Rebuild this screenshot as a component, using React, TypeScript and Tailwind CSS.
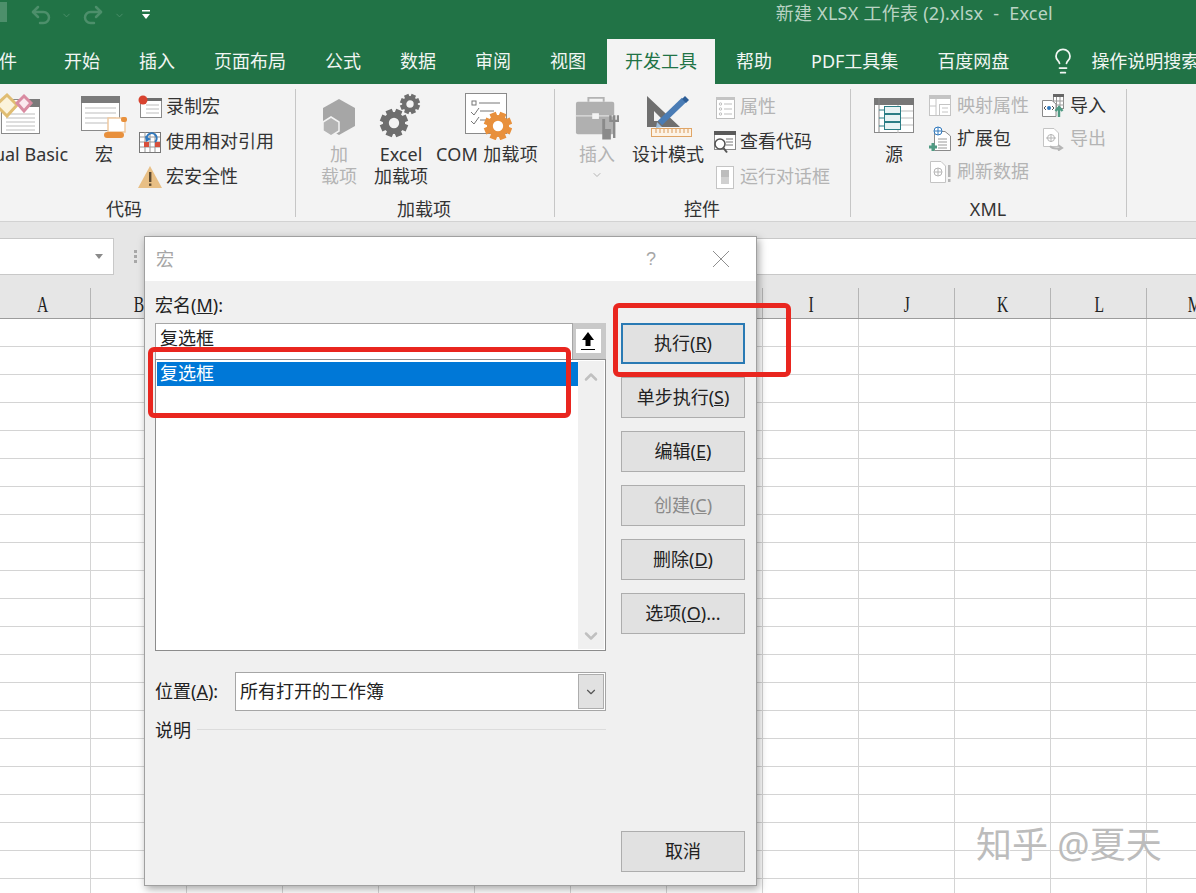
import { ChevronDown, ChevronUp, Lightbulb, Redo2, Undo2 } from 'lucide-react';
import type { ReactNode } from 'react';

const FONT = "font-['Noto_Sans','Noto_Sans_CJK_SC',sans-serif]";

const TABS = ['开始', '插入', '页面布局', '公式', '数据', '审阅', '视图'];
const TABS_AFTER = ['帮助', 'PDF工具集', '百度网盘'];
const COLS = ['A', 'B', 'C', 'D', 'E', 'F', 'G', 'H', 'I', 'J', 'K', 'L', 'M'];

// 齿轮：圆环加一圈齿
function Gear({ cx, cy, r, color, hole = 'none' }: { cx: number; cy: number; r: number; color: string; hole?: string }) {
  const teeth = [0, 45, 90, 135, 180, 225, 270, 315];
  return (
    <g>
      {teeth.map(a => (
        <rect
          key={a}
          x={cx - r * 0.24}
          y={cy - r}
          width={r * 0.48}
          height={r * 0.5}
          fill={color}
          transform={`rotate(${a + 22.5} ${cx} ${cy})`}
        />
      ))}
      <circle cx={cx} cy={cy} r={r * 0.58} fill={hole} stroke={color} strokeWidth={r * 0.42} />
    </g>
  );
}

function TableLines({ x, y, w, rows, gap, color = '#bdbdbd' }: { x: number; y: number; w: number; rows: number; gap: number; color?: string }) {
  return (
    <>
      {Array.from({ length: rows }).map((_, i) => (
        <line key={i} x1={x} x2={x + w} y1={y + i * gap} y2={y + i * gap} stroke={color} strokeWidth="1" />
      ))}
    </>
  );
}

function VbIcon() {
  return (
    <svg width="42" height="44" viewBox="0 0 42 44" className="ml-[4px] overflow-visible">
      <rect x="1.5" y="5.5" width="38" height="34" fill="#fff" stroke="#8a8a8a" />
      <rect x="25" y="5" width="15" height="8" fill="#7a7a7a" />
      <TableLines x={6} y={20} w={29} rows={5} gap={4} />
      <path d="M7 1 L17 11 L7 22 L-4 11 Z" fill="#fbf3dc" stroke="#e0bd73" strokeWidth="3" />
      <path d="M24 2 L31 9 L24 17 L17 9 Z" fill="#fbe9ee" stroke="#d98ba1" strokeWidth="3" />
    </svg>
  );
}

function MacroIcon() {
  return (
    <svg width="46" height="44" viewBox="0 0 46 44">
      <rect x="0.5" y="2.5" width="38" height="34" fill="#fff" stroke="#8a8a8a" />
      <rect x="0" y="2" width="39" height="7" fill="#7a7a7a" />
      <TableLines x={4} y={14} w={31} rows={4} gap={5} />
      <path d="M27 24 H44 V38 H27 Z" fill="#fff" stroke="#f0c9a0" strokeWidth="1.5" />
      <rect x="40" y="23" width="6" height="5" rx="2" fill="#e8903c" />
      <rect x="23" y="38" width="20" height="6" rx="3" fill="#e8903c" />
    </svg>
  );
}

function RecordIcon() {
  return (
    <svg width="24" height="24" viewBox="0 0 24 24">
      <rect x="2.5" y="3.5" width="21" height="19" fill="#fff" stroke="#8a8a8a" />
      <rect x="2" y="3" width="22" height="3" fill="#6e6e6e" />
      <TableLines x={8} y={10} w={13} rows={3} gap={4} />
      <circle cx="5" cy="5" r="4.5" fill="#d8432f" />
    </svg>
  );
}

function RelativeIcon() {
  return (
    <svg width="24" height="24" viewBox="0 0 24 24">
      <rect x="1.5" y="2.5" width="21" height="20" fill="#fff" stroke="#777" />
      {[7, 12, 17].map(x => (
        <line key={x} x1={x} x2={x} y1="2" y2="22" stroke="#999" />
      ))}
      {[7, 12, 17].map(y => (
        <line key={y} x1="2" x2="22" y1={y} y2={y} stroke="#999" />
      ))}
      <rect x="6" y="12" width="5" height="5" fill="#d8503c" />
      <rect x="17" y="12" width="5" height="5" fill="#d8503c" />
      <path d="M9 10 A5 5 0 1 1 17 12" fill="none" stroke="#2f78bd" strokeWidth="2" />
      <path d="M7 6 L8 12 L13 9 Z" fill="#2f78bd" />
    </svg>
  );
}

function WarnIcon() {
  return (
    <svg width="24" height="24" viewBox="0 0 24 24">
      <path d="M12 1 L24 23 H0 Z" fill="#e8bf85" />
      <rect x="11" y="7" width="2.4" height="10" fill="#5c4a30" />
      <rect x="11" y="18.5" width="2.4" height="2.4" fill="#5c4a30" />
    </svg>
  );
}

function AddinIcon() {
  return (
    <svg width="34" height="40" viewBox="0 0 34 40">
      <path d="M17 1 L33 10 V28 L17 37 L1 28 V10 Z" fill="#a6a6a6" />
      <path d="M9 19 L17 24 V33 L9 38 L1 33 V24 Z" fill="#b3b3b3" stroke="#f3f3f3" strokeWidth="1.5" />
    </svg>
  );
}

function ExcelAddinIcon() {
  return (
    <svg width="44" height="48" viewBox="0 0 44 48" className="-mb-[3px]">
      <Gear cx={15} cy={30} r={14} color="#6e6e6e" />
      <Gear cx={31} cy={11} r={10} color="#6e6e6e" />
    </svg>
  );
}

function ComIcon() {
  return (
    <svg width="50" height="48" viewBox="0 0 50 48" className="-mb-[2px]">
      <rect x="3.5" y="1.5" width="41" height="40" fill="#fff" stroke="#8a8a8a" />
      <rect x="10" y="9" width="4" height="4" fill="none" stroke="#777" />
      <line x1="17" x2="38" y1="11" y2="11" stroke="#777" />
      <path d="M9 20 L12 23 L17 16" fill="none" stroke="#777" />
      <line x1="18" x2="32" y1="19" y2="19" stroke="#777" />
      <path d="M9 29 L12 32 L17 25" fill="none" stroke="#777" />
      <line x1="18" x2="26" y1="28" y2="28" stroke="#777" />
      <Gear cx={36} cy={34} r={14} color="#e8903c" hole="#fff" />
    </svg>
  );
}

function BriefcaseIcon() {
  return (
    <svg width="46" height="46" viewBox="0 0 46 46" className="-mb-[3px]">
      <path d="M14 6 V2 H30 V6" fill="none" stroke="#b3b3b3" strokeWidth="2" />
      <rect x="1" y="6" width="40" height="34" rx="2" fill="#b0b0b0" />
      <rect x="1" y="20" width="40" height="1.5" fill="#d9d9d9" />
      <rect x="18" y="18" width="7" height="6" fill="#f3f3f3" />
      <path d="M30 24 L30 36 M30 36 h6 v8 h-6 z" stroke="#8a8a8a" strokeWidth="3" fill="#8a8a8a" />
      <path d="M41 20 v24 M37 20 v6 h8 v-6" stroke="#8a8a8a" strokeWidth="2.5" fill="none" />
    </svg>
  );
}

function DesignIcon() {
  return (
    <svg width="48" height="46" viewBox="0 0 48 46" className="-mb-[4px]">
      <path d="M3 0 L36 31 H3 Z M10 15 V25 H20 Z" fill="#6f6f6f" fillRule="evenodd" />
      <path d="M16 27 L40 4" stroke="#4a7cb5" strokeWidth="6" />
      <path d="M38 3 L41 0 L45 4 L42 7 Z" fill="#2c5d96" />
      <path d="M12 32 L13 26 L18 31 Z" fill="#9fc0df" />
      <rect x="7.5" y="32.5" width="40" height="8" fill="#fdf3e6" stroke="#e0a566" />
      {[12, 16, 20, 24, 28, 32, 36, 40, 44].map(x => (
        <line key={x} x1={x} x2={x} y1="33" y2="37" stroke="#d99a5a" />
      ))}
    </svg>
  );
}

function PropsIcon() {
  return (
    <svg width="24" height="24" viewBox="0 0 24 24">
      <rect x="3.5" y="2.5" width="18" height="21" fill="#fff" stroke="#bdbdbd" />
      <rect x="3" y="2" width="19" height="3" fill="#c4c4c4" />
      {[9, 14, 19].map(y => (
        <g key={y}>
          <circle cx="7.5" cy={y} r="1.2" fill="none" stroke="#bdbdbd" />
          <line x1="11" x2="19" y1={y} y2={y} stroke="#bdbdbd" />
        </g>
      ))}
    </svg>
  );
}

function ViewCodeIcon() {
  return (
    <svg width="24" height="24" viewBox="0 0 24 24">
      <rect x="1.5" y="1.5" width="21" height="18" fill="#fff" stroke="#8a8a8a" />
      <rect x="1" y="1" width="22" height="4" fill="#5a5a5a" />
      {[9, 12, 15].map(y => (
        <line key={y} x1="13" x2="20" y1={y} y2={y} stroke="#777" />
      ))}
      <circle cx="7" cy="14" r="5" fill="#fff" stroke="#555" strokeWidth="1.6" />
      <path d="M10.5 18 L14 22.5" stroke="#555" strokeWidth="2" />
    </svg>
  );
}

function RunDialogIcon() {
  return (
    <svg width="24" height="24" viewBox="0 0 24 24">
      <rect x="3.5" y="1.5" width="17" height="22" fill="#fff" stroke="#c4c4c4" />
      <rect x="8" y="5" width="8" height="14" fill="#d0d0d0" />
      <rect x="8" y="5" width="8" height="7" fill="#bdbdbd" />
    </svg>
  );
}

function SourceIcon() {
  return (
    <svg width="42" height="38" viewBox="0 0 42 38" className="mb-[3px]">
      <rect x="1.5" y="1.5" width="39" height="34" fill="#fff" stroke="#8a8a8a" />
      <rect x="1" y="1" width="40" height="7" fill="#777" />
      <line x1="6" x2="6" y1="1" y2="36" stroke="#8a8a8a" />
      <line x1="25" x2="25" y1="8" y2="36" stroke="#bbb" />
      {[14, 21, 28].map(y => (
        <line key={y} x1="25" x2="40" y1={y} y2={y} stroke="#bbb" />
      ))}
      {[9, 17, 25].map(y => (
        <rect key={y} x="11.5" y={y + 0.5} width="16" height="7" fill="#e8f3f4" stroke="#2b7d85" />
      ))}
      <path d="M6 13 H11 M6 21 H11 M6 29 H11" stroke="#2b7d85" />
    </svg>
  );
}

function MapPropsIcon() {
  return (
    <svg width="24" height="24" viewBox="0 0 24 24">
      <rect x="1.5" y="1.5" width="21" height="20" fill="#fff" stroke="#c4c4c4" />
      <rect x="1" y="1" width="22" height="4" fill="#c4c4c4" />
      <line x1="8" x2="8" y1="5" y2="21" stroke="#c4c4c4" />
      <line x1="1" x2="8" y1="12" y2="12" stroke="#c4c4c4" />
      <rect x="11.5" y="10.5" width="11" height="11" fill="#fff" stroke="#c4c4c4" />
      <path d="M14 14 H20 M14 18 H20" stroke="#c4c4c4" />
    </svg>
  );
}

function ExpansionIcon() {
  return (
    <svg width="24" height="26" viewBox="0 0 24 26">
      <path d="M6.5 5.5 H17 L22.5 10 V24.5 H6.5 Z" fill="#fff" stroke="#8a8a8a" />
      <path d="M10 13 H19 M10 16 H19 M10 19 H19 M10 22 H19" stroke="#999" />
      <circle cx="10" cy="5" r="4" fill="#fff" stroke="#2f78bd" />
      <path d="M6 5 H14 M10 1 V9" stroke="#2f78bd" />
      <path d="M1 21 H9 M5 17 V25" stroke="#4e9a82" strokeWidth="3" />
    </svg>
  );
}

function RefreshDataIcon() {
  return (
    <svg width="24" height="24" viewBox="0 0 24 24">
      <path d="M2.5 1.5 H13 L17.5 6 V22.5 H2.5 Z" fill="#fff" stroke="#c4c4c4" />
      <circle cx="10" cy="12" r="4" fill="none" stroke="#b5b5b5" />
      <path d="M6 12 H14 M10 8 V16" stroke="#b5b5b5" />
      <rect x="20" y="5" width="2.5" height="12" fill="#b5b5b5" />
      <rect x="20" y="19" width="2.5" height="3" fill="#b5b5b5" />
    </svg>
  );
}

function ImportIcon() {
  return (
    <svg width="24" height="24" viewBox="0 0 24 24">
      <rect x="12.5" y="0.5" width="10" height="14" fill="#fff" stroke="#8a8a8a" />
      <rect x="12" y="0" width="11" height="3" fill="#666" />
      <path d="M15.5 3 V15 M19 3 V15 M12 7 H23 M12 11 H23" stroke="#999" />
      <path d="M1.5 6.5 H11 L15 10 V22.5 H1.5 Z" fill="#fff" stroke="#8a8a8a" />
      <circle cx="8" cy="14" r="2" fill="#2f78bd" />
      <path d="M3 14 L5 12 M3 14 L5 16 M13 14 L11 12 M13 14 L11 16" stroke="#555" />
      <path d="M18 23 V14 M14.5 17 L18 13 L21.5 17" fill="none" stroke="#4e9a82" strokeWidth="2.4" />
    </svg>
  );
}

function ExportIcon() {
  return (
    <svg width="24" height="24" viewBox="0 0 24 24">
      <path d="M2.5 1.5 H13 L17.5 6 V19.5 H2.5 Z" fill="#fff" stroke="#c4c4c4" />
      <circle cx="10" cy="11" r="3.5" fill="none" stroke="#b5b5b5" />
      <path d="M5 11 H15 M10 7 V15" stroke="#b5b5b5" />
      <path d="M9 19 C11 22 15 22 20 21 M17 18 L21 21 L17 23.5" fill="none" stroke="#b5b5b5" strokeWidth="2" />
    </svg>
  );
}

function BigButton({ icon, lines, w, off, cls = '' }: { icon: ReactNode; lines: string[]; w: number; off?: boolean; cls?: string }) {
  return (
    <div className={`flex flex-col items-center shrink-0 ${cls}`} style={{ width: w }}>
      <div className="h-[55px] w-full flex items-end justify-center pb-[6px]">{icon}</div>
      {lines.map(l => (
        <div key={l} className={`h-[22px] leading-[20px] whitespace-nowrap ${off ? 'text-[#b4b4b4]' : 'text-[#333]'}`}>
          {l}
        </div>
      ))}
    </div>
  );
}

function SmallButton({ icon, label, off, h = 'h-[35px]', gap = 'gap-[4px]' }: { icon: ReactNode; label: string; off?: boolean; h?: string; gap?: string }) {
  return (
    <div className={`${h} flex items-center ${gap} whitespace-nowrap ${off ? 'text-[#b4b4b4]' : 'text-[#333]'}`}>
      <span className="w-[24px] h-[24px] flex items-center justify-center shrink-0">{icon}</span>
      {label}
    </div>
  );
}

function RibbonGroup({ w, label, labelX, children }: { w: number; label: string; labelX: number; children: ReactNode }) {
  return (
    <div className="h-[128px] shrink-0 flex flex-col border-r border-[#c6c6c6]" style={{ width: w }}>
      <div className="flex h-[108px]">{children}</div>
      <div className="h-[20px] leading-[24px] text-[#333] relative">
        <span className="absolute -translate-x-1/2 whitespace-nowrap" style={{ left: labelX }}>
          {label}
        </span>
      </div>
    </div>
  );
}

function DlgButton({ children, off, focus, cls = '' }: { children: ReactNode; off?: boolean; focus?: boolean; cls?: string }) {
  return (
    <div
      className={`h-[41px] w-[124px] shrink-0 flex items-center justify-center bg-[#e1e1e1] ${
        focus ? 'border-2 border-[#2a7ab4]' : 'border border-[#adadad]'
      } ${off ? 'text-[#8a8a8a]' : 'text-[#222]'} ${cls}`}
    >
      <span>{children}</span>
    </div>
  );
}

export default function App() {
  return (
    <div className={`relative w-[1196px] h-[893px] overflow-hidden bg-white text-[18px] ${FONT}`}>
      {/* 标题栏 */}
      <div className="h-[38px] bg-[#217346] flex items-center text-[#b9d3c4] relative">
        <div className="w-[7px] h-[20px] bg-[#4d8f6b] mb-[14px]" />
        <Undo2 size={24} strokeWidth={2.5} className="text-[#4d8f6b] ml-[22px] mb-[8px]" />
        <ChevronDown size={11} className="text-[#4d8f6b] ml-[8px] mb-[8px]" />
        <Redo2 size={24} strokeWidth={2.5} className="text-[#4d8f6b] ml-[9px] mb-[8px]" />
        <ChevronDown size={11} className="text-[#4d8f6b] ml-[9px] mb-[8px]" />
        <svg width="10" height="10" viewBox="0 0 10 10" className="ml-[16px] mb-[8px]">
          <rect x="1" y="0" width="8" height="1.5" fill="#fff" />
          <path d="M1 4 H9 L5 9 Z" fill="#fff" />
        </svg>
        <div className="ml-auto mr-[143px] whitespace-pre mb-[12px] tracking-[0.25px]">新建 XLSX 工作表 (2).xlsx  -  Excel</div>
      </div>

      {/* 选项卡 */}
      <div className="h-[46px] bg-[#217346] flex items-stretch gap-[39px] -ml-[19px] text-[#f1f6f3] whitespace-nowrap">
        <span className="leading-[46px]">文件</span>
        <div className="flex gap-[39px] ml-[8px]">
          {TABS.map(t => (
            <span key={t} className="leading-[46px]">
              {t}
            </span>
          ))}
          <span className="leading-[44px] mt-px -mx-[18px] px-[18px] bg-[#f3f3f3] text-[#217346]">开发工具</span>
          {TABS_AFTER.map(t => (
            <span key={t} className="leading-[46px]">
              {t}
            </span>
          ))}
          <span className="flex items-center gap-[14px] ml-[1px]">
            <Lightbulb size={28} strokeWidth={1.5} />
            <span>操作说明搜索</span>
          </span>
        </div>
      </div>

      {/* 功能区 */}
      <div className="h-[138px] bg-[#f3f3f3] border-b border-[#d2d2d2] pt-[5px] flex">
        <RibbonGroup w={296} label="代码" labelX={124}>
          <BigButton w={100} cls="-ml-[31px]" icon={<VbIcon />} lines={['Visual Basic']} />
          <BigButton w={46} cls="ml-[12px]" icon={<MacroIcon />} lines={['宏']} />
          <div className="ml-[11px]">
            <SmallButton icon={<RecordIcon />} label="录制宏" />
            <SmallButton icon={<RelativeIcon />} label="使用相对引用" />
            <SmallButton icon={<WarnIcon />} label="宏安全性" />
          </div>
        </RibbonGroup>
        <RibbonGroup w={259} label="加载项" labelX={128}>
          <BigButton w={44} cls="ml-[21px]" off icon={<AddinIcon />} lines={['加', '载项']} />
          <BigButton w={56} cls="ml-[12px]" icon={<ExcelAddinIcon />} lines={['Excel', '加载项']} />
          <BigButton w={104} cls="ml-[6px] tracking-[0.3px]" icon={<ComIcon />} lines={['COM 加载项']} />
        </RibbonGroup>
        <RibbonGroup w={296} label="控件" labelX={147}>
          <div className="ml-[20px] w-[44px] flex flex-col items-center">
            <BigButton w={44} off icon={<BriefcaseIcon />} lines={['插入']} />
            <ChevronDown size={12} className="text-[#b4b4b4] mt-[3px]" />
          </div>
          <BigButton w={72} cls="ml-[13px]" icon={<DesignIcon />} lines={['设计模式']} />
          <div className="ml-[9px]">
            <SmallButton off gap="gap-[3px]" icon={<PropsIcon />} label="属性" />
            <SmallButton gap="gap-[3px]" icon={<ViewCodeIcon />} label="查看代码" />
            <SmallButton off gap="gap-[3px]" icon={<RunDialogIcon />} label="运行对话框" />
          </div>
        </RibbonGroup>
        <RibbonGroup w={276} label="XML" labelX={137}>
          <BigButton w={44} cls="ml-[21px]" icon={<SourceIcon />} lines={['源']} />
          <div className="ml-[12px]">
            <SmallButton off h="h-[33px]" gap="gap-[5px]" icon={<MapPropsIcon />} label="映射属性" />
            <SmallButton h="h-[33px]" gap="gap-[5px]" icon={<ExpansionIcon />} label="扩展包" />
            <SmallButton off h="h-[33px]" gap="gap-[5px]" icon={<RefreshDataIcon />} label="刷新数据" />
          </div>
          <div className="ml-[12px]">
            <SmallButton h="h-[33px]" gap="gap-[5px]" icon={<ImportIcon />} label="导入" />
            <SmallButton off h="h-[33px]" gap="gap-[5px]" icon={<ExportIcon />} label="导出" />
          </div>
        </RibbonGroup>
      </div>

      {/* 编辑栏 */}
      <div className="h-[53px] bg-[#e6e6e6] pt-[16px] flex">
        <div className="w-[114px] h-[37px] bg-white border border-[#c8c8c8] border-l-0 flex items-center justify-end pr-[10px]">
          <svg width="8" height="5" viewBox="0 0 8 5">
            <path d="M0 0 H8 L4 5 Z" fill="#8a8a8a" />
          </svg>
        </div>
        <div className="w-[40px] flex flex-col items-center justify-center gap-[2px] pl-[2px]">
          <span className="w-[3px] h-[3px] bg-[#a8a8a8]" />
          <span className="w-[3px] h-[3px] bg-[#a8a8a8]" />
          <span className="w-[3px] h-[3px] bg-[#a8a8a8]" />
        </div>
        <div className="flex-1 h-[37px] bg-white border-y border-[#c8c8c8]" />
      </div>

      {/* 工作表 */}
      <div className="h-[44px] bg-[#e6e6e6] border-b border-[#9c9c9c] flex -ml-[5px] font-['Liberation_Serif',serif] text-[24px] leading-[28px] text-[#222]">
        {COLS.map(c => (
          <div key={c} className="w-[96px] shrink-0 flex items-end justify-center relative">
            <span className="inline-block scale-x-[0.65]">{c}</span>
            <span className="absolute right-0 bottom-0 top-[13px] w-px bg-[#b5b5b5]" />
          </div>
        ))}
      </div>
      <div className="-ml-[5px]">
        {Array.from({ length: 21 }).map((_, r) => (
          <div key={r} className="flex h-[28px]">
            {COLS.map(c => (
              <div key={c} className="w-[96px] shrink-0 border-r border-b border-[#d4d4d4]" />
            ))}
          </div>
        ))}
      </div>

      {/* 水印 */}
      <div className="absolute left-[976px] top-[822px] text-[36px] leading-[46px] text-[#bcbcbc] whitespace-pre [text-shadow:1px_1px_0_#fff]">
        知乎 @夏天
      </div>

      {/* 宏 对话框 */}
      <div className="absolute left-[144px] top-[236px] w-[613px] h-[650px] flex flex-col bg-[#f0f0f0] border border-[#a0a0a0] shadow-[2px_3px_8px_rgba(0,0,0,0.35)] text-[#222]">
        <div className="h-[44px] shrink-0 bg-white flex items-center pl-[11px] text-[#a6a6a6]">
          <span>宏</span>
          <span className="ml-auto font-['Liberation_Sans',sans-serif]">?</span>
          <svg width="18" height="18" viewBox="0 0 18 18" className="ml-[56px] mr-[26px]">
            <path d="M1 1 L17 17 M17 1 L1 17" stroke="#8f8f8f" strokeWidth="1" />
          </svg>
        </div>
        <div className="flex-1 flex pl-[10px]">
          <div className="w-[451px] shrink-0 pt-[12px]">
            <div className="h-[24px] leading-[24px]">
              宏名(<u>M</u>):
            </div>
            <div className="mt-[6px] h-[36px] flex">
              <div className="w-[418px] border border-[#a6a6a6] border-b-0 bg-white pl-[4px] leading-[28px]">复选框</div>
              <div className="w-[33px] bg-[#c9c9c9] flex items-center justify-center pr-[3px]">
                <div className="w-[25px] h-[24px] bg-white flex items-center justify-center">
                  <svg width="14" height="20" viewBox="0 0 14 20">
                    <path d="M7 1 L13 9 H9.5 V15 H4.5 V9 H1 Z M0 18 H14 V19 H0 Z" fill="#000" />
                  </svg>
                </div>
              </div>
            </div>
            <div className="h-[292px] border border-[#8c8c8c] bg-white flex p-px">
              <div className="flex-1 pt-px">
                <div className="h-[24px] bg-[#0078d7] text-white pl-[3px] leading-[22px]">复选框</div>
              </div>
              <div className="w-[26px] bg-[#f0f0f0] flex flex-col items-center justify-between pt-[6px] pb-[3px] text-[#c0c0c0]">
                <ChevronUp size={20} strokeWidth={3} />
                <ChevronDown size={20} strokeWidth={3} />
              </div>
            </div>
            <div className="mt-[21px] h-[39px] flex items-center">
              <span className="w-[80px] shrink-0">
                位置(<u>A</u>):
              </span>
              <div className="flex-1 h-full border border-[#a6a6a6] bg-white flex items-center pl-[4px]">
                <span>所有打开的工作簿</span>
                <div className="ml-auto mr-px h-[35px] w-[26px] bg-[#e1e1e1] border border-[#adadad] flex items-center justify-center">
                  <ChevronDown size={14} className="text-[#555]" />
                </div>
              </div>
            </div>
            <div className="mt-[7px] h-[24px] flex items-center gap-[6px]">
              <span>说明</span>
              <span className="flex-1 h-px bg-[#dcdcdc] mb-[2px]" />
            </div>
          </div>
          <div className="ml-[15px] pt-[42px] pb-[13px] flex flex-col gap-[13px]">
            <DlgButton focus>
              执行(<u>R</u>)
            </DlgButton>
            <DlgButton>
              单步执行(<u>S</u>)
            </DlgButton>
            <DlgButton>
              编辑(<u>E</u>)
            </DlgButton>
            <DlgButton off>
              创建(<u>C</u>)
            </DlgButton>
            <DlgButton>
              删除(<u>D</u>)
            </DlgButton>
            <DlgButton>
              选项(<u>O</u>)...
            </DlgButton>
            <DlgButton cls="mt-auto">取消</DlgButton>
          </div>
        </div>
      </div>

      {/* 红框标注 */}
      <div className="absolute left-[148px] top-[347px] w-[423px] h-[71px] border-[5px] border-[#e9261f] rounded-[6px]" />
      <div className="absolute left-[613px] top-[303px] w-[178px] h-[74px] border-[5px] border-[#e9261f] rounded-[6px]" />
    </div>
  );
}
